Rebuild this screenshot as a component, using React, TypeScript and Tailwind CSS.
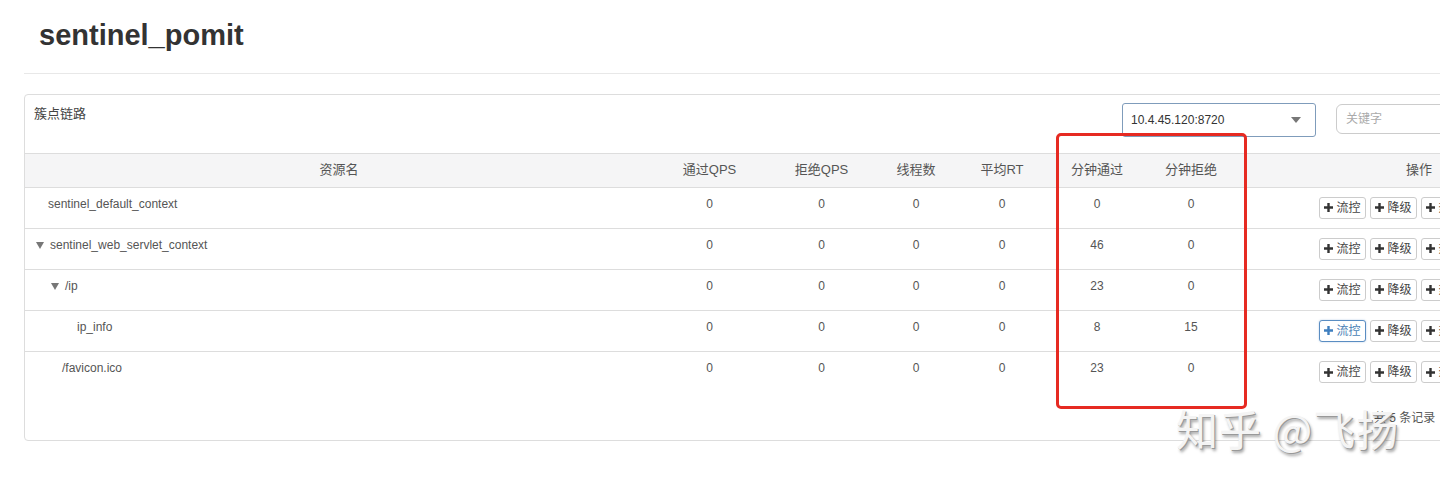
import React from 'react';

const cols = 'grid grid-cols-[628px_113px_111px_78px_94px_96px_92px_386px]';

interface Row { name: string; indent: string; arrow?: boolean; vals: number[]; active?: boolean }

const rows: Row[] = [
  { name: 'sentinel_default_context', indent: 'pl-[23px]', vals: [0, 0, 0, 0, 0, 0] },
  { name: 'sentinel_web_servlet_context', indent: 'pl-[11px]', arrow: true, vals: [0, 0, 0, 0, 46, 0] },
  { name: '/ip', indent: 'pl-[26px]', arrow: true, vals: [0, 0, 0, 0, 23, 0] },
  { name: 'ip_info', indent: 'pl-[52px]', vals: [0, 0, 0, 0, 8, 15], active: true },
  { name: '/favicon.ico', indent: 'pl-[37px]', vals: [0, 0, 0, 0, 23, 0] },
];

const heads = ['资源名', '通过QPS', '拒绝QPS', '线程数', '平均RT', '分钟通过', '分钟拒绝', '操作'];

function Plus({ blue }: { blue?: boolean }) {
  return (
    <svg width="9" height="9" viewBox="0 0 9 9" className="shrink-0">
      <path d="M3.3 0h2.4v3.3H9v2.4H5.7V9H3.3V5.7H0V3.3h3.3z" fill={blue ? '#3f7fbf' : '#333'} />
    </svg>
  );
}

function OpButton({ label, active }: { label: string; active?: boolean }) {
  return (
    <button
      className={
        active
          ? 'h-[22px] w-[47px] flex items-center justify-center gap-[3px] rounded-[3px] border border-[#5a8dc2] bg-white text-[12px] text-[#4a7fb5] shadow-[0_0_2px_rgba(70,130,190,0.4)]'
          : 'h-[22px] w-[47px] flex items-center justify-center gap-[3px] rounded-[3px] border border-[#ccc] bg-white text-[12px] text-[#444]'
      }
    >
      <Plus blue={active} />
      {label}
    </button>
  );
}

export default function App() {
  return (
    <div className="relative w-[1440px] h-[489px] overflow-hidden bg-white font-['Liberation_Sans','Noto_Sans_CJK_SC',sans-serif]">
      <div className="h-[73px] pl-[39px] pt-[17px] text-[29px] leading-[36px] font-bold text-[#333]">sentinel_pomit</div>
      <div className="ml-[24px] border-t border-[#e8e8e8]" />

      <div className="ml-[24px] mt-[20px] w-[1600px] h-[347px] border border-[#ddd] rounded-[4px]">
        <div className="h-[58px] flex">
          <div className="w-[1097px] pl-[9px] pt-[9px] text-[13px] text-[#444]">簇点链路</div>
          <div className="mt-[8px] w-[194px] h-[34px] border border-[#7f9cbb] rounded-[3px] flex items-center justify-between pl-[8px] pr-[14px] text-[12px] text-[#333]">
            <span>10.4.45.120:8720</span>
            <svg width="10" height="6" viewBox="0 0 10 6"><path d="M0 0h10L5 6z" fill="#777" /></svg>
          </div>
          <div className="ml-[20px] mt-[9px] w-[200px] h-[30px] border border-[#ccc] rounded-[6px] flex items-center pl-[9px] text-[12px] text-[#aaa]">关键字</div>
        </div>

        <div className={`${cols} h-[35px] bg-[#f5f5f6] border-y border-[#ddd] items-center pb-[2px] text-[13px] text-[#555]`}>
          {heads.map((h, i) => (
            <div key={h} className={i === 7 ? 'text-center pr-[22px]' : 'text-center'}>{h}</div>
          ))}
        </div>

        {rows.map((r, idx) => (
          <div key={r.name} className={`${cols} h-[41px] text-[12px] text-[#555] ${idx < rows.length - 1 ? 'border-b border-[#ddd]' : ''}`}>
            <div className={`${r.indent} pt-[7px] flex items-start gap-[6px]`}>
              {r.arrow && (
                <svg width="8" height="7" viewBox="0 0 8 7" className="mt-[6px]"><path d="M0 0h8L4 7z" fill="#777" /></svg>
              )}
              <span>{r.name}</span>
            </div>
            {r.vals.map((v, i) => (
              <div key={i} className="pt-[7px] text-center">{v}</div>
            ))}
            <div className="flex items-center gap-[4px] pl-[82px] pb-[1px]">
              <OpButton label="流控" active={r.active} />
              <OpButton label="降级" />
              <OpButton label="热点" />
              <OpButton label="授权" />
            </div>
          </div>
        ))}

        <div className="ml-[1349px] pt-[16px] text-[12px] text-[#555]">共 5 条记录</div>
      </div>

      {/* annotation overlay */}
      <div className="absolute left-[1056px] top-[133px] w-[191px] h-[276px] border-[3px] border-[#e62a22] rounded-[5px]" />

      {/* watermark */}
      <div className="absolute left-[1176px] top-[402px] text-[42px] leading-[52px] text-[#f4f4f4] tracking-[1px] [text-shadow:1px_1px_0_#999,2px_3px_3px_rgba(0,0,0,0.35)] font-['Noto_Sans_CJK_SC',sans-serif]">
        知乎 @飞扬
      </div>
    </div>
  );
}
